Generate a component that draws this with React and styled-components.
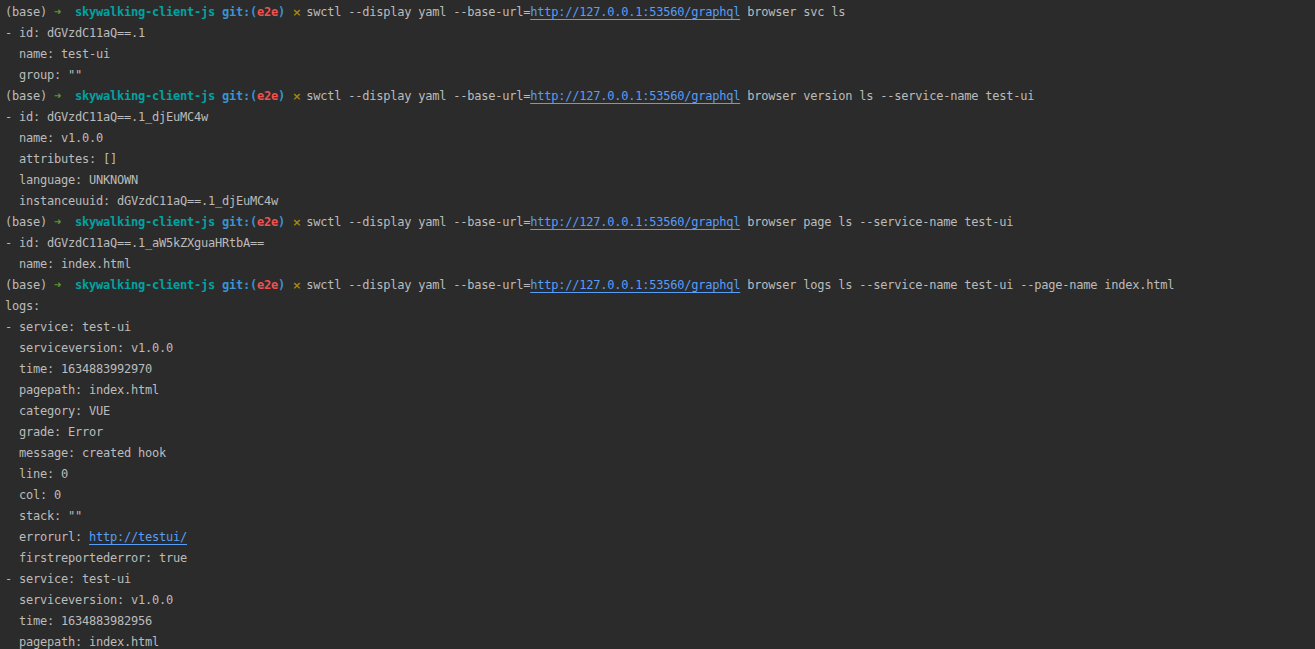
import React from "react";
import styled, { createGlobalStyle } from "styled-components";

const Global = createGlobalStyle`
  html, body { margin: 0; padding: 0; background: #2b2b2b; }
  body { overflow: hidden; }
`;

const Terminal = styled.div`
  background: #2b2b2b;
  width: 1315px;
  height: 649px;
  overflow: hidden;
  box-sizing: border-box;
  padding: 2px 0 0 5px;
  font-family: "DejaVu Sans Mono", "Liberation Mono", monospace;
  font-size: 12px;
  letter-spacing: -0.224px;
  color: #bbbbbb;
  display: flex;
  flex-direction: column;
`;

const Line = styled.div`
  flex: none;
  height: 21px;
  line-height: 21px;
  white-space: pre;
`;

const Seg = styled.span`
  color: ${(p) => p.$c || "inherit"};
  font-weight: ${(p) => (p.$b ? "bold" : "normal")};
`;

const Cross = styled.span`
  display: inline-block;
  width: 7px;
  text-align: center;
  color: #a68a0d;
  font-family: "DejaVu Sans", sans-serif;
  font-weight: bold;
  font-size: 11px;
`;

const Link = styled.span`
  color: #589df6;
  text-decoration: underline;
  text-underline-offset: 3px;
`;

const URL = "http://127.0.0.1:53560/graphql";

function Prompt({ rest }) {
  return (
    <Line>
      {"(base) "}
      <Seg $c="#5c962c" $b>➜</Seg>
      {"  "}
      <Seg $c="#00a3a3" $b>skywalking-client-js</Seg>{" "}
      <Seg $c="#3993d4" $b>git:(</Seg>
      <Seg $c="#f0524f" $b>e2e</Seg>
      <Seg $c="#3993d4" $b>)</Seg>{" "}
      <Cross>×</Cross>
      {" swctl --display yaml --base-url="}
      <Link>{URL}</Link>
      {rest}
    </Line>
  );
}

const T = ({ children }) => <Line>{children}</Line>;

export default function App() {
  return (
    <>
      <Global />
      <Terminal>
        <Prompt rest=" browser svc ls" />
        <T>- id: dGVzdC11aQ==.1</T>
        <T>  name: test-ui</T>
        <T>  group: ""</T>
        <Prompt rest=" browser version ls --service-name test-ui" />
        <T>- id: dGVzdC11aQ==.1_djEuMC4w</T>
        <T>  name: v1.0.0</T>
        <T>  attributes: []</T>
        <T>  language: UNKNOWN</T>
        <T>  instanceuuid: dGVzdC11aQ==.1_djEuMC4w</T>
        <Prompt rest=" browser page ls --service-name test-ui" />
        <T>- id: dGVzdC11aQ==.1_aW5kZXguaHRtbA==</T>
        <T>  name: index.html</T>
        <Prompt rest=" browser logs ls --service-name test-ui --page-name index.html" />
        <T>logs:</T>
        <T>- service: test-ui</T>
        <T>  serviceversion: v1.0.0</T>
        <T>  time: 1634883992970</T>
        <T>  pagepath: index.html</T>
        <T>  category: VUE</T>
        <T>  grade: Error</T>
        <T>  message: created hook</T>
        <T>  line: 0</T>
        <T>  col: 0</T>
        <T>  stack: ""</T>
        <T>
          {"  errorurl: "}
          <Link>http://testui/</Link>
        </T>
        <T>  firstreportederror: true</T>
        <T>- service: test-ui</T>
        <T>  serviceversion: v1.0.0</T>
        <T>  time: 1634883982956</T>
        <T>  pagepath: index.html</T>
      </Terminal>
    </>
  );
}
